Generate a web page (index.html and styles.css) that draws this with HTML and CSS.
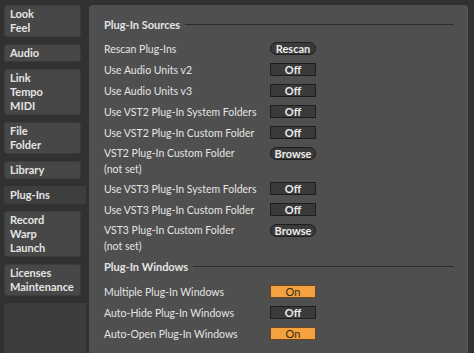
FILE: index.html
```html
<!DOCTYPE html>
<html lang="en">
<head>
    <meta charset="UTF-8">
    <title>Preferences - Plug-Ins</title>
    <link rel="stylesheet" href="styles.css">
</head>
<body>
    <div class="sidebar">
        <div class="tab">Look<br>Feel</div>
        <div class="tab">Audio</div>
        <div class="tab">Link<br>Tempo<br>MIDI</div>
        <div class="tab">File<br>Folder</div>
        <div class="tab">Library</div>
        <div class="tab selected">Plug-Ins</div>
        <div class="tab">Record<br>Warp<br>Launch</div>
        <div class="tab">Licenses<br>Maintenance</div>
        <div class="filler"></div>
    </div>

    <div class="main">
        <div class="section-title"><span>Plug-In Sources</span><div class="rule"></div></div>

        <div class="row">
            <span class="label">Rescan Plug-Ins</span>
            <button class="pill">Rescan</button>
        </div>
        <div class="row">
            <span class="label">Use Audio Units v2</span>
            <button class="toggle">Off</button>
        </div>
        <div class="row">
            <span class="label">Use Audio Units v3</span>
            <button class="toggle">Off</button>
        </div>
        <div class="row">
            <span class="label">Use VST2 Plug-In System Folders</span>
            <button class="toggle">Off</button>
        </div>
        <div class="row">
            <span class="label">Use VST2 Plug-In Custom Folder</span>
            <button class="toggle">Off</button>
        </div>
        <div class="row folder">
            <span class="label">VST2 Plug-In Custom Folder<br>(not set)</span>
            <button class="pill">Browse</button>
        </div>
        <div class="row">
            <span class="label">Use VST3 Plug-In System Folders</span>
            <button class="toggle">Off</button>
        </div>
        <div class="row">
            <span class="label">Use VST3 Plug-In Custom Folder</span>
            <button class="toggle">Off</button>
        </div>
        <div class="row folder">
            <span class="label">VST3 Plug-In Custom Folder<br>(not set)</span>
            <button class="pill">Browse</button>
        </div>

        <div class="section-title second"><span>Plug-In Windows</span><div class="rule"></div></div>

        <div class="row">
            <span class="label">Multiple Plug-In Windows</span>
            <button class="toggle on">On</button>
        </div>
        <div class="row">
            <span class="label">Auto-Hide Plug-In Windows</span>
            <button class="toggle">Off</button>
        </div>
        <div class="row">
            <span class="label">Auto-Open Plug-In Windows</span>
            <button class="toggle on">On</button>
        </div>
    </div>
</body>
</html>
```

FILE: styles.css
```css
html, body {
    height: 100%;
}
body {
    margin: 0;
    background: #313131;
    font-family: Lato, "Open Sans", sans-serif;
    font-size: 11px;
    color: #e4e4e4;
    display: flex;
    overflow: hidden;
}
.sidebar {
    width: 86px;
    flex-shrink: 0;
    padding-top: 5px;
    display: flex;
    flex-direction: column;
    gap: 7px;
}
.tab {
    margin-left: 4px;
    width: 77px;
    box-sizing: border-box;
    padding: 1px 0 1px 5px;
    line-height: 14px;
    font-weight: 700;
    background: #474747;
    border: 1px solid #3c3c3c;
    border-radius: 3px;
}
.tab.selected {
    width: 82px;
    background: #3e3e3e;
    border-color: #3e3e3e;
    border-radius: 3px 0 0 3px;
}
.filler {
    flex: 1;
    margin-left: 4px;
    background: #3d3d3d;
    border-radius: 3px 0 0 0;
}
.main {
    flex: 1;
    margin: 5px 6px 0 3px;
    padding: 9px 13px 0 15px;
    background: #4f4f4f;
    border-radius: 4px 4px 0 0;
    border-right: 1px solid #585858;
}
.section-title {
    display: flex;
    align-items: center;
    gap: 5px;
    height: 21px;
    font-weight: 700;
    margin-bottom: 3px;
}
.section-title.second {
    margin-top: 1px;
    margin-bottom: 4px;
}
.rule {
    flex: 1;
    height: 1px;
    background: #2c2c2c;
}
.row {
    display: flex;
    align-items: center;
    height: 21px;
}
.row.folder {
    height: 35px;
    align-items: flex-start;
}
.label {
    width: 166px;
    flex-shrink: 0;
    white-space: nowrap;
    font-size: 10.5px;
}
.folder .label {
    padding-top: 2px;
    line-height: 16px;
}
.toggle, .pill {
    font-family: inherit;
    font-size: 11px;
    font-weight: 700;
    width: 46px;
    height: 13px;
    padding: 0;
    line-height: 11px;
    color: #ececec;
    background: #3a3a3a;
    border: 1px solid #1e1e1e;
}
.folder .pill {
    margin-top: 4px;
}
.pill {
    border-radius: 7px;
}
.toggle.on {
    background: #f3a23f;
    border-color: #6a4520;
    color: #3a2a14;
    font-weight: 400;
}
```
